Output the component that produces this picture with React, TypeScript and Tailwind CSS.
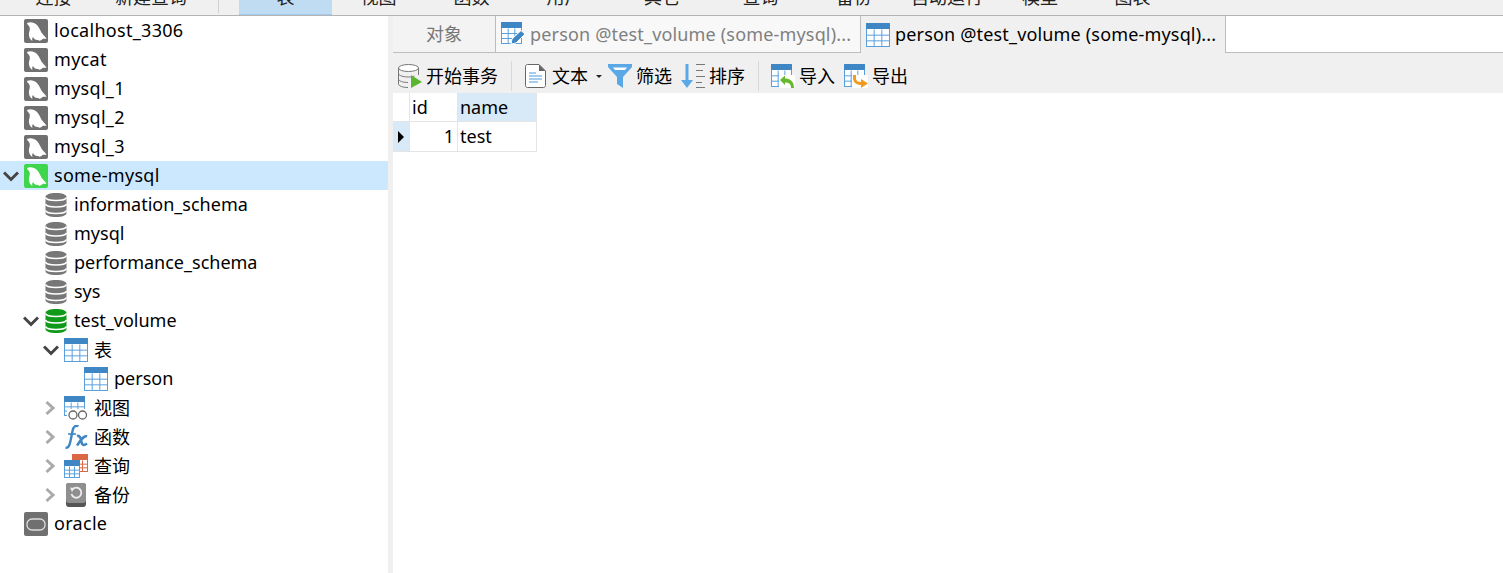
import React from "react";

const font = "font-['Noto_Sans','Noto_Sans_CJK_SC',sans-serif]";

function Dolphin({ bg = "#707070" }: { bg?: string }) {
  return (
    <svg width="24" height="24" viewBox="0 0 24 24" className="shrink-0">
      <rect width="24" height="24" rx="2" fill={bg} />
      <path
        d="M3 4C6 2.500 10 3 13 6C16 9 16.500 13 19 15.500C20.500 17 22 18.500 22.500 20C20.500 19.500 19.500 19.500 18.500 20C17 21.500 15.500 22.500 14 21C12 21.500 10 20 9 18C8 19.500 8 20.500 8.500 22C5.500 20.500 4 16 5.500 12C6 10 6 8.500 5 7C4 6 3 5 3 4Z"
        fill="#fff"
      />
    </svg>
  );
}

function Oracle() {
  return (
    <svg width="24" height="24" viewBox="0 0 24 24" className="shrink-0">
      <rect width="24" height="24" rx="2" fill="#707070" />
      <rect x="3" y="7" width="18" height="11" rx="5" fill="none" stroke="#ddd" strokeWidth="1.300" />
    </svg>
  );
}

function Db({ color = "#777777" }: { color?: string }) {
  return (
    <svg width="24" height="24" viewBox="0 0 24 24" className="shrink-0">
      <path d="M1.500 4C1.500 1.500 6 0 12 0S22.500 1.500 22.500 4V20C22.500 22.500 18 24 12 24S1.500 22.500 1.500 20Z" fill={color} />
      <path d="M1.500 4.500C2.500 8.500 21.500 8.500 22.500 4.500" fill="none" stroke="#fff" strokeWidth="1.500" />
      <path d="M1.500 11C2.500 15 21.500 15 22.500 11" fill="none" stroke="#fff" strokeWidth="1.500" />
      <path d="M1.500 17.500C2.500 21.500 21.500 21.500 22.500 17.500" fill="none" stroke="#fff" strokeWidth="1.500" />
    </svg>
  );
}

function Grid({ x = 0.5, y = 0.5, w = 23, h = 23, head = "#3f87c4", line = "#5aa0dc" }: { x?: number; y?: number; w?: number; h?: number; head?: string; line?: string }) {
  const cw = w / 3;
  const rh = (h - 6) / 3;
  return (
    <g>
      <rect x={x} y={y} width={w} height={h} fill="#fff" stroke={line} />
      <rect x={x - 0.5} y={y - 0.5} width={w + 1} height={6} rx="1" fill={head} />
      {[1, 2].map((i) => (
        <path key={"c" + i} d={`M${x + cw * i} ${y + 6}V${y + h}`} stroke={line} />
      ))}
      {[1, 2].map((i) => (
        <path key={"r" + i} d={`M${x} ${y + 6 + rh * i}H${x + w}`} stroke={line} />
      ))}
    </g>
  );
}

function TableIcon() {
  return (
    <svg width="24" height="24" viewBox="0 0 24 24" className="shrink-0">
      <Grid />
    </svg>
  );
}

function DesignIcon() {
  return (
    <svg width="24" height="24" viewBox="0 0 24 24" className="shrink-0">
      <Grid w={20} h={21} />
      <path d="M10 22L11 17L20 8.500L24 12L15 21Z" fill="#3f87c4" stroke="#fff" strokeWidth="1" />
    </svg>
  );
}

function ViewIcon() {
  return (
    <svg width="24" height="24" viewBox="0 0 24 24" className="shrink-0">
      <Grid w={20} h={19} />
      <rect x="3" y="13" width="20" height="11" fill="#fff" />
      <circle cx="9" cy="19" r="4" fill="#fff" stroke="#666" strokeWidth="1.300" />
      <circle cx="18.500" cy="19" r="4" fill="#fff" stroke="#666" strokeWidth="1.300" />
    </svg>
  );
}

function FuncIcon() {
  return (
    <svg width="24" height="24" viewBox="0 0 24 24" className="shrink-0">
      <path d="M1.500 22.500C4 23.500 5.500 21 6.500 16L8.500 6C9.500 1.500 11.500 0 14.500 1" fill="none" stroke="#3f87c4" strokeWidth="2.400" />
      <path d="M4 9H12" stroke="#3f87c4" strokeWidth="1.600" />
      <path d="M13 11C16 10 16.500 13 17.500 17C18 20 19.500 21 23 18.500M23 11.500C20 10 17 15 13 20.500" fill="none" stroke="#3f87c4" strokeWidth="2.600" />
    </svg>
  );
}

function QueryIcon() {
  return (
    <svg width="24" height="24" viewBox="0 0 24 24" className="shrink-0">
      <Grid x={8.500} y={0.500} w={15} h={17} head="#db6844" line="#db6844" />
      <Grid x={0.500} y={6.500} w={15} h={17} />
    </svg>
  );
}

function BackupIcon() {
  return (
    <svg width="24" height="24" viewBox="0 0 24 24" className="shrink-0">
      <rect x="2" y="0" width="20" height="24" rx="3" fill="#555" />
      <rect x="2" y="0" width="20" height="20" rx="3" fill="#8f8f8f" />
      <path d="M8.500 6.500A5 5 0 1 1 7.500 11" fill="none" stroke="#eee" strokeWidth="1.800" />
      <path d="M6 4.500L10.500 5L8 9Z" fill="#eee" />
    </svg>
  );
}

function Chevron({ open, dark }: { open?: boolean; dark?: boolean }) {
  return (
    <svg width="16" height="16" viewBox="0 0 16 16" className="shrink-0">
      <path
        d={open ? "M1 4.500L8 11.500L15 4.500" : "M3.500 2L10 8L3.500 14"}
        fill="none"
        stroke={dark ? "#444" : "#aaa"}
        strokeWidth="3"
      />
    </svg>
  );
}

const depthPad: Record<number, string> = {
  0: "pl-[3px] tracking-[0.3px]",
  1: "pl-[23px]",
  2: "pl-[43px]",
  3: "pl-[63px]",
};

type Node = {
  label: string;
  depth: number;
  icon: React.ReactNode;
  arrow?: "open" | "closed";
  selected?: boolean;
};

const tree: Node[] = [
  { label: "localhost_3306", depth: 0, icon: <Dolphin /> },
  { label: "mycat", depth: 0, icon: <Dolphin /> },
  { label: "mysql_1", depth: 0, icon: <Dolphin /> },
  { label: "mysql_2", depth: 0, icon: <Dolphin /> },
  { label: "mysql_3", depth: 0, icon: <Dolphin /> },
  { label: "some-mysql", depth: 0, icon: <Dolphin bg="#3fd64d" />, arrow: "open", selected: true },
  { label: "information_schema", depth: 1, icon: <Db /> },
  { label: "mysql", depth: 1, icon: <Db /> },
  { label: "performance_schema", depth: 1, icon: <Db /> },
  { label: "sys", depth: 1, icon: <Db /> },
  { label: "test_volume", depth: 1, icon: <Db color="#119a1a" />, arrow: "open" },
  { label: "表", depth: 2, icon: <TableIcon />, arrow: "open" },
  { label: "person", depth: 3, icon: <TableIcon /> },
  { label: "视图", depth: 2, icon: <ViewIcon />, arrow: "closed" },
  { label: "函数", depth: 2, icon: <FuncIcon />, arrow: "closed" },
  { label: "查询", depth: 2, icon: <QueryIcon />, arrow: "closed" },
  { label: "备份", depth: 2, icon: <BackupIcon />, arrow: "closed" },
  { label: "oracle", depth: 0, icon: <Oracle /> },
];

const menu: { label: string; w: string; active?: boolean }[] = [
  { label: "表", w: "w-[93px]", active: true },
  { label: "视图", w: "w-[93px]" },
  { label: "函数", w: "w-[93px]" },
  { label: "用户", w: "w-[93px]" },
  { label: "其它", w: "w-[102px]" },
  { label: "查询", w: "w-[95px]" },
  { label: "备份", w: "w-[92px]" },
  { label: "自动运行", w: "w-[94px]" },
  { label: "模型", w: "w-[92px]" },
  { label: "图表", w: "w-[93px]" },
];

function TopBar() {
  return (
    <div className="flex h-[16px] shrink-0 items-end overflow-hidden border-b border-[#b4b4b4] bg-[#f0f0f0] text-[18px] leading-[24px] text-[#222]">
      <div className="flex h-[15px] w-[107px] items-end justify-center pb-[6px]">
        <span className="whitespace-nowrap">连接</span>
      </div>
      <div className="flex h-[15px] w-[88px] items-end justify-center pb-[6px]">
        <span className="whitespace-nowrap">新建查询</span>
      </div>
      <div className="mb-[2px] ml-[23px] mr-[20px] h-[13px] w-px bg-[#d0d0d0]" />
      {menu.map((m) => (
        <div
          key={m.label + m.w}
          className={
            m.active
              ? "flex h-[15px] w-[93px] items-end justify-center border-b border-[#a3cbee] bg-[#c0dcf3] pb-[5px]"
              : `flex h-[15px] ${m.w} items-end justify-center pb-[6px]`
          }
        >
          <span className="whitespace-nowrap">{m.label}</span>
        </div>
      ))}
    </div>
  );
}

function Tree() {
  return (
    <div className="w-[388px] shrink-0 bg-white text-[18px] text-black">
      {tree.map((n) => (
        <div
          key={n.label + n.depth}
          className={`flex h-[29px] items-center ${depthPad[n.depth]} ${n.selected ? "bg-[#cce8ff]" : ""}`}
        >
          <div className="flex w-[21px] shrink-0 items-center">
            {n.arrow && <Chevron open={n.arrow === "open"} dark={n.arrow === "open"} />}
          </div>
          {n.icon}
          <span className={`ml-[6px] whitespace-nowrap ${n.depth === 2 ? "pt-[2px]" : ""}`}>{n.label}</span>
        </div>
      ))}
    </div>
  );
}

function Tabs() {
  return (
    <div className="flex h-[37px] shrink-0 text-[18px]">
      <div className="flex w-[103px] items-center justify-center border-r border-b border-[#bdbdbd] bg-[#f3f3f3] text-[#777]">
        对象
      </div>
      <div className="flex w-[365px] items-center gap-[5px] border-r border-b border-[#bdbdbd] bg-[#f8f8f8] pl-[5px] tracking-[0.17px] text-[#808080]">
        <DesignIcon />
        <span className="whitespace-nowrap">person @test_volume (some-mysql)...</span>
      </div>
      <div className="flex w-[365px] items-center gap-[5px] border-r border-[#bdbdbd] bg-[#f0f0f0] pl-[5px] tracking-[0.17px] text-black">
        <TableIcon />
        <span className="whitespace-nowrap">person @test_volume (some-mysql)...</span>
      </div>
      <div className="flex-1 border-b border-[#bdbdbd] bg-white" />
    </div>
  );
}

function BeginIcon() {
  return (
    <svg width="24" height="24" viewBox="0 0 24 24" className="shrink-0">
      <ellipse cx="10.500" cy="4" rx="10" ry="3.500" fill="#fff" stroke="#777" />
      <path d="M0.500 4V20C0.500 22 5 23.500 10 23.500M20.500 4V11M0.500 9.500C0.500 11.500 5 13 10.500 13C13 13 15 12.700 16.500 12M0.500 15C0.500 17 5 18.500 10 18.500" fill="none" stroke="#777" />
      <path d="M13 11L24 18L13 24Z" fill="#5cb531" />
    </svg>
  );
}

function DocIcon() {
  return (
    <svg width="22" height="24" viewBox="0 0 22 24" className="shrink-0">
      <path d="M2.500 0.500H14L20.500 7V21.500C20.500 22.600 19.600 23.500 18.500 23.500H2.500C1.400 23.500 0.500 22.600 0.500 21.500V2.500C0.500 1.400 1.400 0.500 2.500 0.500Z" fill="#fff" stroke="#666" />
      <path d="M14 0.500V7H20.500Z" fill="#666" />
      <path d="M4 9H11M4 12H17M4 15H17M4 18H13" stroke="#4a9ae0" strokeWidth="1.200" />
    </svg>
  );
}

function FilterIcon() {
  return (
    <svg width="24" height="24" viewBox="0 0 24 24" className="shrink-0">
      <path d="M0 0H24V3L15 13V24L9 20V13L0 3Z" fill="#5aa9e6" />
      <path d="M5 3.500H19L17 6H7Z" fill="#fff" />
    </svg>
  );
}

function SortIcon() {
  return (
    <svg width="24" height="24" viewBox="0 0 24 24" className="shrink-0">
      <path d="M4.500 0H7.500V16H12L6 24L0 16H4.500Z" fill="#5aa9e6" />
      <path d="M15 0.500H24M15 6.500H22M15 12.500H24M15 18.500H21M15 23.500H24" stroke="#777" />
    </svg>
  );
}

function ImportIcon() {
  return (
    <svg width="24" height="24" viewBox="0 0 24 24" className="shrink-0">
      <Grid w={20} h={22} />
      <rect x="8" y="11" width="16" height="13" fill="#fff" />
      <path d="M9 16L14 11.500V14.500C19 14.500 23 17 23 24H20C20 20 18 18.500 14 18.500V21Z" fill="#66b82f" />
    </svg>
  );
}

function ExportIcon() {
  return (
    <svg width="24" height="24" viewBox="0 0 24 24" className="shrink-0">
      <Grid w={20} h={22} />
      <rect x="8" y="11" width="16" height="13" fill="#fff" />
      <path d="M9 11H12V14C12 17 14 18 17 18V15L24 19.500L17 24V21C12 21 9 18 9 14Z" fill="#f39a1c" />
    </svg>
  );
}

function Toolbar() {
  return (
    <div className="flex h-[40px] shrink-0 items-center bg-[#f0f0f0] pl-[5px] pt-[6px] text-[18px] text-black">
      <BeginIcon />
      <span className="ml-[4px] whitespace-nowrap">开始事务</span>
      <div className="mx-[13px] h-[30px] w-px bg-[#d8d8d8]" />
      <DocIcon />
      <span className="ml-[5px] whitespace-nowrap">文本</span>
      <div className="ml-[8px] mr-[6px] h-0 w-0 border-x-[3px] border-t-[3px] border-x-transparent border-t-[#222]" />
      <FilterIcon />
      <span className="ml-[4px] whitespace-nowrap">筛选</span>
      <div className="ml-[9px]">
        <SortIcon />
      </div>
      <span className="ml-[4px] whitespace-nowrap">排序</span>
      <div className="ml-[13px] mr-[12px] h-[30px] w-px bg-[#d8d8d8]" />
      <ImportIcon />
      <span className="ml-[4px] whitespace-nowrap">导入</span>
      <div className="ml-[9px]">
        <ExportIcon />
      </div>
      <span className="ml-[4px] whitespace-nowrap">导出</span>
    </div>
  );
}

function DataGrid() {
  return (
    <div className="flex-1 bg-white text-[18px] text-black">
      <div className="flex h-[29px]">
        <div className="w-[17px] border-r border-b border-[#e4e4e4]" />
        <div className="w-[48px] border-r border-b border-[#e4e4e4] pl-[2px] leading-[28px]">id</div>
        <div className="w-[79px] border-r border-b border-[#e4e4e4] bg-[#d8e9f8] pl-[2px] leading-[28px]">name</div>
      </div>
      <div className="flex h-[30px]">
        <div className="flex w-[17px] items-center justify-center border-r border-b border-[#e4e4e4] bg-[#d8e9f8]">
          <div className="h-0 w-0 border-y-[6px] border-l-[6px] border-y-transparent border-l-black" />
        </div>
        <div className="w-[48px] border-r border-b border-[#e4e4e4] pr-[3px] text-right leading-[28px]">1</div>
        <div className="w-[79px] border-r border-b border-[#e4e4e4] pl-[2px] leading-[28px]">test</div>
      </div>
    </div>
  );
}

export default function App() {
  return (
    <div className={`flex h-[573px] flex-col overflow-hidden bg-white ${font}`}>
      <TopBar />
      <div className="flex min-h-0 flex-1">
        <Tree />
        <div className="w-[5px] shrink-0 bg-[#f0f0f0]" />
        <div className="flex min-w-0 flex-1 flex-col">
          <Tabs />
          <Toolbar />
          <DataGrid />
        </div>
      </div>
    </div>
  );
}
